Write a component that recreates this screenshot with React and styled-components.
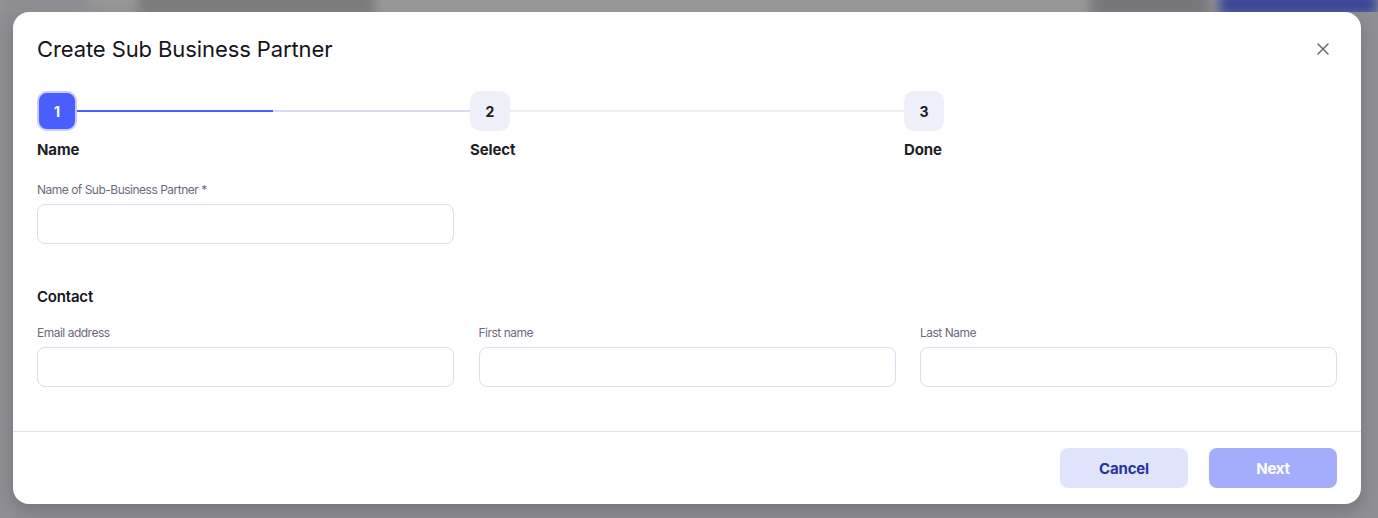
import React from "react";
import styled, { createGlobalStyle } from "styled-components";

const Global = createGlobalStyle`
  html, body { margin: 0; padding: 0; }
  body {
    background: #8f8e94;
    font-family: Inter, "Noto Sans", sans-serif;
    color: #1c1c24;
  }
`;

const Page = styled.div`
  width: 1378px;
  height: 518px;
  overflow: hidden;
  background: #8f8e94;
`;

const Backdrop = styled.div`
  height: 12px;
  display: flex;
  background: #989898;
  overflow: hidden;
`;

const Blur = styled.div`
  width: ${(p) => p.w}px;
  margin-left: ${(p) => p.ml || 0}px;
  height: 24px;
  margin-top: -8px;
  background: ${(p) => p.bg};
  filter: blur(6px);
`;

const Modal = styled.div`
  margin: 0 17px 0 13px;
  height: 492px;
  background: #fff;
  border-radius: 16px;
  display: flex;
  flex-direction: column;
  box-shadow: 0 6px 16px rgba(40, 40, 50, 0.25);
`;

const Body = styled.div`
  padding: 24px 24px 0;
  flex: 1;
`;

const Header = styled.div`
  display: flex;
  align-items: center;
  justify-content: space-between;
  height: 26px;
`;

const Title = styled.h1`
  margin: 0;
  font-size: 22px;
  font-weight: 400;
  letter-spacing: -0.1px;
  color: #15151c;
`;

const Close = styled.button`
  border: 0;
  background: none;
  padding: 0;
  width: 20px;
  height: 20px;
  display: flex;
  align-items: center;
  justify-content: center;
  margin-right: 4px;
`;

const Stepper = styled.div`
  margin-top: 29px;
  display: grid;
  grid-template-columns: 433px 434px 1fr;
`;

const Step = styled.div`
  display: flex;
  flex-direction: column;
  gap: 9px;
`;

const StepTrack = styled.div`
  display: flex;
  align-items: center;
`;

const Badge = styled.div`
  width: 40px;
  height: 40px;
  box-sizing: border-box;
  border-radius: 10px;
  display: flex;
  align-items: center;
  justify-content: center;
  font-size: 14px;
  font-weight: 700;
  flex-shrink: 0;
  background: ${(p) => (p.active ? "#4a5dff" : "#eeeff9")};
  color: ${(p) => (p.active ? "#fff" : "#1c1c24")};
  border: ${(p) => (p.active ? "2px solid #c7cdff" : "none")};
`;

const Line = styled.div`
  flex: 1;
  height: 2px;
  background: ${(p) =>
    p.progress
      ? `linear-gradient(to right, #4a5dff 0 50%, #d8dbf6 50% 100%)`
      : "#ecedf7"};
`;

const StepLabel = styled.div`
  font-size: 15px;
  font-weight: 700;
  color: #1f1f26;
  letter-spacing: -0.1px;
`;

const Field = styled.div`
  display: flex;
  flex-direction: column;
  gap: 7px;
  width: ${(p) => (p.w ? `${p.w}px` : "auto")};
`;

const Label = styled.label`
  font-size: 12px;
  color: #6c6b7c;
  letter-spacing: -0.5px;
  line-height: 15px;
`;

const Input = styled.input`
  height: 40px;
  box-sizing: border-box;
  border: 1px solid #dedbf0;
  border-radius: 8px;
  outline: none;
  font: inherit;
  padding: 0 12px;
`;

const NameSection = styled.div`
  margin-top: 23px;
`;

const SectionTitle = styled.h2`
  margin: 43px 0 0;
  font-size: 15px;
  font-weight: 600;
  letter-spacing: -0.2px;
  color: #15151c;
  line-height: 20px;
`;

const ContactGrid = styled.div`
  margin-top: 18px;
  display: grid;
  grid-template-columns: 417px 417px 417px;
  column-gap: 24.5px;
`;

const Footer = styled.div`
  border-top: 1px solid #e3e1ec;
  padding: 16px 24px;
  display: flex;
  justify-content: flex-end;
  gap: 21px;
`;

const Button = styled.button`
  width: 128px;
  height: 40px;
  border: 0;
  border-radius: 8px;
  font-family: inherit;
  font-size: 15px;
  font-weight: 700;
  letter-spacing: -0.2px;
  background: ${(p) => (p.primary ? "#a4adfc" : "#e1e4fd")};
  color: ${(p) => (p.primary ? "#fff" : "#27359a")};
`;

const steps = [
  { n: 1, label: "Name", active: true, line: "progress" },
  { n: 2, label: "Select", line: "plain" },
  { n: 3, label: "Done" },
];

export default function App() {
  return (
    <Page>
      <Global />
      <Backdrop>
        <Blur w={90} bg="#8d8c92" />
        <Blur w={240} ml={50} bg="#7a797c" />
        <Blur w={720} ml={0} bg="#989898" />
        <Blur w={120} ml={0} bg="#76757a" />
        <Blur w={160} ml={10} bg="#3a4598" />
      </Backdrop>
      <Modal>
        <Body>
          <Header>
            <Title>Create Sub Business Partner</Title>
            <Close aria-label="Close">
              <svg width="14" height="14" viewBox="0 0 14 14">
                <path
                  d="M2 2 L12 12 M12 2 L2 12"
                  stroke="#6d6c7e"
                  strokeWidth="1.6"
                  strokeLinecap="round"
                />
              </svg>
            </Close>
          </Header>

          <Stepper>
            {steps.map((s) => (
              <Step key={s.n}>
                <StepTrack>
                  <Badge active={s.active}>{s.n}</Badge>
                  {s.line && <Line progress={s.line === "progress"} />}
                </StepTrack>
                <StepLabel>{s.label}</StepLabel>
              </Step>
            ))}
          </Stepper>

          <NameSection>
            <Field w={417}>
              <Label>Name of Sub-Business Partner *</Label>
              <Input />
            </Field>
          </NameSection>

          <SectionTitle>Contact</SectionTitle>
          <ContactGrid>
            <Field>
              <Label>Email address</Label>
              <Input />
            </Field>
            <Field>
              <Label>First name</Label>
              <Input />
            </Field>
            <Field>
              <Label>Last Name</Label>
              <Input />
            </Field>
          </ContactGrid>
        </Body>
        <Footer>
          <Button>Cancel</Button>
          <Button primary>Next</Button>
        </Footer>
      </Modal>
    </Page>
  );
}
